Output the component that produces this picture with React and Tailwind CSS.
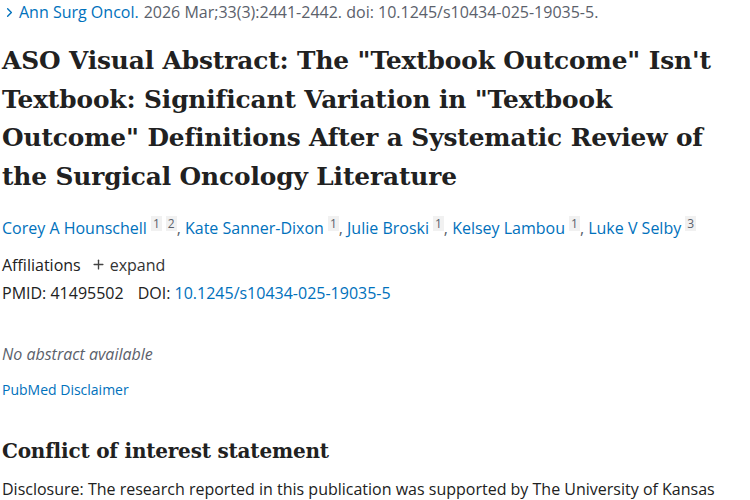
import { ChevronRight, Plus } from 'lucide-react';

const authors = [
  { name: 'Corey A Hounschell', aff: ['1', '2'] },
  { name: 'Kate Sanner-Dixon', aff: ['1'] },
  { name: 'Julie Broski', aff: ['1'] },
  { name: 'Kelsey Lambou', aff: ['1'] },
  { name: 'Luke V Selby', aff: ['3'] },
];

function Sup({ n }) {
  return (
    <span className="ml-[4px] inline-block bg-[#f1f1f1] px-[2px] text-[12px] leading-[15px] text-[#5b616b] align-[6px]">
      {n}
    </span>
  );
}

export default function App() {
  return (
    <div className="w-[750px] h-[500px] overflow-hidden bg-white pl-[2px] font-['Open_Sans',sans-serif] text-[#212121]">
      <div className="flex items-center h-[24px] text-[16px] text-[#5b616b]">
        <ChevronRight className="w-[15px] h-[15px] text-[#0071bc] mr-[2px]" strokeWidth={2.2} />
        <a className="text-[#0071bc] mr-[5px]">Ann Surg Oncol.</a>
        <span>2026 Mar;33(3):2441-2442. doi: 10.1245/s10434-025-19035-5.</span>
      </div>

      <h1 className="mt-[18px] w-[728px] font-['DejaVu_Serif',serif] font-bold text-[24.8px] leading-[38.7px] tracking-[-0.1px] text-[#212121]">
        ASO Visual Abstract: The "Textbook Outcome" Isn't Textbook: Significant Variation in "Textbook Outcome" Definitions After a Systematic Review of the Surgical Oncology Literature
      </h1>

      <div className="mt-[19px] text-[16px] leading-[22px] text-[#5b616b]">
        {authors.map((a, i) => (
          <span key={a.name}>
            <a className="text-[#0071bc]">{a.name}</a>
            {a.aff.map((n) => (
              <Sup key={n} n={n} />
            ))}
            {i < authors.length - 1 && <span>, </span>}
          </span>
        ))}
      </div>

      <div className="mt-[15px] flex items-center text-[16px] leading-[22px] text-[#212121]">
        <span>Affiliations</span>
        <Plus className="ml-[10px] mr-[4px] w-[15px] h-[15px] text-[#444]" strokeWidth={2.2} />
        <span className="text-[#333]">expand</span>
      </div>

      <div className="mt-[6px] text-[16px] leading-[22px] text-[#212121]">
        <span>PMID: 41495502</span>
        <span className="ml-[14px]">DOI: </span>
        <a className="text-[#0071bc]">10.1245/s10434-025-19035-5</a>
      </div>

      <div className="mt-[39px] text-[16px] leading-[22px] italic text-[#5b616b]">No abstract available</div>

      <div className="mt-[15px] text-[14px] leading-[20px] text-[#0071bc]">PubMed Disclaimer</div>

      <h2 className="mt-[36px] font-['DejaVu_Serif',serif] font-bold text-[20px] leading-[30px] tracking-[-0.2px]">Conflict of interest statement</h2>

      <p className="mt-[12px] w-[735px] text-[16px] leading-[22px] text-[#212121]">
        Disclosure: The research reported in this publication was supported by The University of Kansas Cancer Center.
      </p>
    </div>
  );
}
